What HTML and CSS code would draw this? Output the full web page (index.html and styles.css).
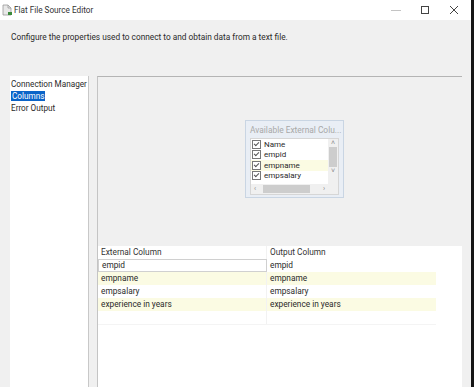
FILE: index.html
```html
<!DOCTYPE html>
<html lang="en">

<head>
    <meta charset="UTF-8">
    <title>Flat File Source Editor</title>
    <link rel="stylesheet" href="styles.css">
</head>

<body>
    <div class="window">
        <div class="titlebar">
            <svg class="app-icon" width="12" height="12" viewBox="0 0 12 12">
                <path d="M2 1h5l3 3v7H2z" fill="#e8e8e8" stroke="#9a9a9a" stroke-width="0.8" />
                <path d="M7 1v3h3" fill="none" stroke="#9a9a9a" stroke-width="0.8" />
                <rect x="7" y="8" width="4" height="3" fill="#3a8a3a" />
            </svg>
            <span class="title">Flat File Source Editor</span>
            <div class="controls">
                <span class="ctl">
                    <svg width="10" height="10" viewBox="0 0 10 10"><path d="M0 5.5h10" stroke="#c4c4c4" stroke-width="1" /></svg>
                </span>
                <span class="ctl">
                    <svg width="10" height="10" viewBox="0 0 10 10"><rect x="1.5" y="1.5" width="7" height="7" fill="none" stroke="#444" stroke-width="1" /></svg>
                </span>
                <span class="ctl">
                    <svg width="10" height="10" viewBox="0 0 10 10"><path d="M1 1l8 8M9 1l-8 8" stroke="#444" stroke-width="1" /></svg>
                </span>
            </div>
        </div>

        <p class="desc">Configure the properties used to connect to and obtain data from a text file.</p>

        <div class="main">
            <ul class="nav">
                <li>Connection Manager</li>
                <li><span class="selected">Columns</span></li>
                <li>Error Output</li>
            </ul>

            <div class="panel">
                <div class="preview">
                    <div class="avail">
                        <div class="avail-head">Available External Colu...</div>
                        <div class="avail-list">
                            <div class="avail-rows">
                                <div class="avail-row"><span class="chk"></span>Name</div>
                                <div class="avail-row"><span class="chk"></span>empid</div>
                                <div class="avail-row hl"><span class="chk"></span>empname</div>
                                <div class="avail-row"><span class="chk"></span>empsalary</div>
                                <div class="hscroll">
                                    <span class="arr">&lsaquo;</span>
                                    <span class="thumb-h"></span>
                                    <span class="arr">&rsaquo;</span>
                                </div>
                            </div>
                            <div class="vscroll">
                                <span class="arr">&#708;</span>
                                <span class="thumb-v"></span>
                                <span class="arr">&#709;</span>
                                <span class="corner"></span>
                            </div>
                        </div>
                    </div>
                </div>

                <div class="grid">
                    <div class="grid-row head">
                        <div class="cell">External Column</div>
                        <div class="cell">Output Column</div>
                    </div>
                    <div class="grid-row">
                        <div class="cell current">empid</div>
                        <div class="cell">empid</div>
                    </div>
                    <div class="grid-row alt">
                        <div class="cell">empname</div>
                        <div class="cell">empname</div>
                    </div>
                    <div class="grid-row">
                        <div class="cell">empsalary</div>
                        <div class="cell">empsalary</div>
                    </div>
                    <div class="grid-row alt">
                        <div class="cell">experience in years</div>
                        <div class="cell">experience in years</div>
                    </div>
                    <div class="grid-row empty">
                        <div class="cell"></div>
                        <div class="cell"></div>
                    </div>
                </div>
            </div>
        </div>
    </div>
    <div class="edge"></div>
</body>

</html>
```

FILE: styles.css
```css
html,
body {
    margin: 0;
    height: 387px;
    overflow: hidden;
}

body {
    display: flex;
    font-family: Roboto, "Open Sans", sans-serif;
    font-size: 8.5px;
    color: #2a2a2a;
}

.edge {
    flex: 1;
    background: #151515;
}

.window {
    width: 471px;
    flex: none;
    height: 387px;
    background: #f0f0f0;
    display: flex;
    flex-direction: column;
}

.titlebar {
    height: 20px;
    background: #fff;
    display: flex;
    align-items: center;
    padding: 0 3px 0 1px;
}

.app-icon {
    margin-right: 1px;
}

.title {
    font-size: 8.2px;
    color: #333;
}

.controls {
    margin-left: auto;
    display: flex;
    height: 100%;
}

.ctl {
    width: 29px;
    display: flex;
    align-items: center;
    justify-content: center;
}

.desc {
    margin: 12px 0 0 11px;
    font-size: 8.3px;
    height: 44px;
}

.main {
    flex: 1;
    display: flex;
    padding-left: 10px;
    gap: 8px;
    min-height: 0;
}

.nav {
    list-style: none;
    margin: 0;
    padding: 2px 0 0 1px;
    width: 77px;
    background: #fff;
    border-right: 1px solid #c8c8c8;
    line-height: 12px;
    white-space: nowrap;
    font-size: 8.2px;
}

.selected {
    background: #0a64c8;
    color: #fff;
    padding: 0 1px;
}

.panel {
    width: 364px;
    border-top: 1px solid #b4b4b4;
    border-left: 1px solid #c4c4c4;
    display: flex;
    flex-direction: column;
}

.preview {
    height: 169px;
    display: flex;
    align-items: flex-start;
    padding: 43px 0 0 147px;
    box-sizing: border-box;
}

.avail {
    width: 99px;
    height: 78px;
    box-sizing: border-box;
    background: #e9eef5;
    border: 1px solid #c9d5e3;
    padding: 0 4px;
}

.avail-head {
    color: #a8a8a8;
    font-size: 8.4px;
    height: 17px;
    line-height: 19px;
    white-space: nowrap;
}

.avail-list {
    display: flex;
    background: #fff;
    border: 1px solid #d6d6d6;
    height: 57px;
    box-sizing: border-box;
}

.avail-rows {
    flex: 1;
    display: flex;
    flex-direction: column;
}

.avail-row {
    height: 10.5px;
    display: flex;
    align-items: center;
    font-size: 8px;
    gap: 3px;
}

.avail-row.hl {
    background: #fbfbe3;
}

.chk {
    width: 7px;
    height: 7px;
    border: 1px solid #777;
    margin-left: 1px;
    position: relative;
    background: #fff;
}

.chk::after {
    content: "";
    position: absolute;
    left: 2px;
    top: 0;
    width: 2px;
    height: 4px;
    border: solid #555;
    border-width: 0 1px 1px 0;
    transform: rotate(45deg);
}

.hscroll {
    margin-top: auto;
    height: 10px;
    display: flex;
    align-items: center;
    background: #f0f0f0;
}

.thumb-h {
    flex: 1;
    height: 8px;
    margin: 0 10px 0 4px;
    background: #cdcdcd;
}

.arr {
    color: #888;
    font-size: 7px;
    width: 8px;
    text-align: center;
    line-height: 8px;
}

.vscroll {
    width: 10px;
    display: flex;
    flex-direction: column;
    align-items: center;
    background: #f0f0f0;
}

.thumb-v {
    width: 8px;
    height: 20px;
    background: #cdcdcd;
}

.corner {
    margin-top: auto;
    height: 10px;
}

.grid {
    flex: 1;
    background: #fff;
}

.grid-row {
    display: flex;
    width: 338px;
    height: 13px;
    font-size: 8.3px;
}

.grid-row.alt {
    background: #fbfbe3;
}

.grid-row.head {
    color: #333;
}

.cell {
    box-sizing: border-box;
    padding-left: 3px;
    line-height: 13px;
    white-space: nowrap;
}

.cell:first-child {
    width: 169px;
    border-right: 1px solid #f2f2f2;
}

.cell.current {
    border: 1px solid #d0d0d0;
    line-height: 11px;
}

.grid-row.empty {
    border-bottom: 1px solid #f4f4f4;
}
```
